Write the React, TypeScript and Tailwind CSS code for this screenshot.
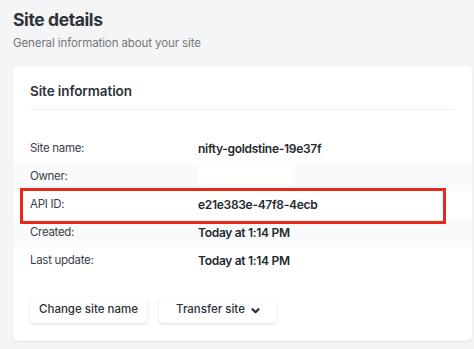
const rows = [
  { label: "Site name:", value: "nifty-goldstine-19e37f" },
  { label: "Owner:", value: "" },
  { label: "API ID:", value: "e21e383e-47f8-4ecb" },
  { label: "Created:", value: "Today at 1:14 PM" },
  { label: "Last update:", value: "Today at 1:14 PM" },
];

function ChevronDown() {
  return (
    <svg width="9" height="6" viewBox="0 0 10 7" className="ml-[6px] mt-[2px]">
      <path d="M1.5 1.5 L5 5 L8.5 1.5" fill="none" stroke="#2a2f35" strokeWidth="2.6" strokeLinecap="round" strokeLinejoin="round" />
    </svg>
  );
}

export default function App() {
  return (
    <div
      className="h-[349px] w-[474px] overflow-hidden bg-[#f3f5f7] pl-[13px] pr-[2px] pt-[8px] text-[#2e3338]"
      style={{ fontFamily: "Inter, 'Noto Sans', sans-serif" }}
    >
      <h1 className="text-[17.5px] font-bold leading-[24px] tracking-[-0.4px]">Site details</h1>
      <p className="mt-[3px] text-[11.5px] leading-[16px] tracking-[-0.1px] text-[#72777d]">General information about your site</p>

      <div className="mt-[15px] rounded-[5px] bg-white pb-[18px] shadow-[0_1px_2px_rgba(0,0,0,0.08)]">
        <div className="mx-[17px] border-b border-[#f0f2f4] pb-[8px] pt-[15px]">
          <h2 className="text-[13.5px] font-semibold leading-[20px] tracking-[-0.1px]">Site information</h2>
        </div>

        <div className="mt-[25px] flex flex-col">
          {rows.map((row, i) => {
            const isApi = row.label === "API ID:";
            return (
              <div
                key={row.label}
                className={
                  "relative flex h-[28px] items-center pl-[17px] text-[11.5px] " +
                  (i % 2 === 1 ? "bg-[#f9fafb]" : "bg-white")
                }
              >
                {isApi && (
                  <div className="absolute bottom-[-5px] left-[7px] top-[-3px] z-10 w-[426px] border-[3px] border-[#e8281b]" />
                )}
                <span className="w-[168px] tracking-[-0.3px] text-[#3b4046]">{row.label}</span>
                {row.value ? (
                  <span className="text-[12px] font-semibold tracking-[-0.3px] text-[#24292e]">{row.value}</span>
                ) : (
                  <span className="h-[26px] w-[95px] bg-white" />
                )}
              </div>
            );
          })}
        </div>

        <div className="ml-[17px] mt-[22px] flex gap-[12px]">
          <button className="flex h-[26px] w-[117px] items-center justify-center rounded-[3px] bg-white text-[11.5px] font-medium text-[#2a2f35] shadow-[0_1px_3px_rgba(0,0,0,0.14)]">
            Change site name
          </button>
          <button className="flex h-[26px] w-[118px] items-center justify-center rounded-[3px] bg-white text-[11.5px] font-medium text-[#2a2f35] shadow-[0_1px_3px_rgba(0,0,0,0.14)]">
            Transfer site
            <ChevronDown />
          </button>
        </div>
      </div>
    </div>
  );
}
